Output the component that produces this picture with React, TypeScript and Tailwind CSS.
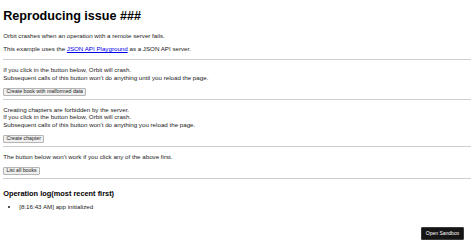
import React from "react";

function Btn({ children }: { children: React.ReactNode }) {
  return (
    <div className="flex">
      <button className="bg-[#efefef] border border-[#b5b5b5] rounded-[1px] px-[2.4px] py-0 text-[5.2px] leading-[1.15] text-[#222]">
        {children}
      </button>
    </div>
  );
}

function Hr() {
  return <div className="my-[3.2px] h-0 border-t border-[#cfcfcf]" />;
}

export default function App() {
  return (
    <div
      className="relative w-[474px] h-[248px] overflow-hidden bg-white text-[#1a1a1a] px-[3.2px] py-[0.1px] text-[6.2px] leading-[7.36px]"
      style={{ fontFamily: '"Liberation Sans", Arial, sans-serif' }}
    >
      <h1 className="text-[12.6px] font-bold leading-[1.15] mt-[8.5px] mb-[8.5px] text-black">
        Reproducing issue ###
      </h1>
      <p className="my-[6.4px]">
        Orbit crashes when an operation with a remote server fails.
      </p>
      <p className="my-[6.4px]">
        This example uses the{" "}
        <a className="text-[#0000ee] underline" href="#">
          JSON API Playground
        </a>{" "}
        as a JSON API server.
      </p>
      <Hr />
      <div>
        <p className="my-[6.4px]">
          If you click in the button below, Orbit will crash.
          <br />
          Subsequent calls of this button won't do anything until you reload the page.
        </p>
        <Btn>Create book with malformed data</Btn>
      </div>
      <Hr />
      <div>
        <p className="my-[6.4px]">
          Creating chapters are forbidden by the server.
          <br />
          If you click in the button below, Orbit will crash.
          <br />
          Subsequent calls of this button won't do anything you reload the page.
        </p>
        <Btn>Create chapter</Btn>
      </div>
      <Hr />
      <div>
        <p className="my-[6.4px]">
          The button below won't work if you click any of the above first.
        </p>
        <Btn>List all books</Btn>
      </div>
      <Hr />
      <h3 className="text-[7.4px] font-bold leading-[1.15] mt-[10.5px] mb-[4.8px] text-black">
        Operation log(most recent first)
      </h3>
      <ul className="list-disc pl-[16px] my-[4.8px]">
        <li>[8:16:43 AM] app initialized</li>
      </ul>
      <div className="absolute right-[10px] bottom-[8px] w-[43px] h-[13px] flex items-center justify-center bg-[#151515] border border-[#3a3a3a] rounded-[1px] text-white text-[5px]">
        Open Sandbox
      </div>
    </div>
  );
}
